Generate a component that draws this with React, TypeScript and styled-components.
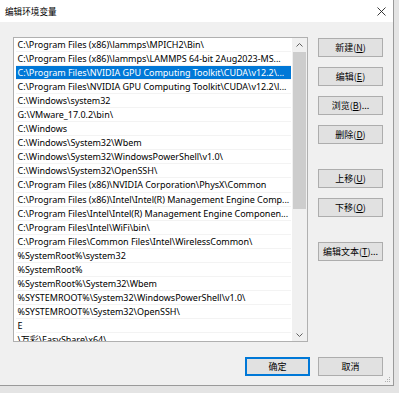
import React from 'react';
import styled, { createGlobalStyle } from 'styled-components';

const Global = createGlobalStyle`
  html, body { margin: 0; padding: 0; background: #e4e4e4; }
  body { width: 399px; height: 393px; overflow: hidden; }
  * { box-sizing: border-box; }
`;

const Window = styled.div`
  position: relative;
  width: 394px;
  height: 386px;
  background: #f0f0f0;
  border-right: 1px solid #9a9a9a;
  border-bottom: 1px solid #9a9a9a;
  display: flex;
  flex-direction: column;
  font-family: "Noto Sans", "Noto Sans CJK SC", sans-serif;
  color: #000;
`;

const TitleBar = styled.div`
  height: 22px;
  background: #fff;
  display: flex;
  align-items: center;
  justify-content: space-between;
  padding: 0 7px 0 5px;
  font-family: "Noto Sans CJK SC", sans-serif;
  font-size: 8.6px;
`;

const Main = styled.div`
  display: flex;
  gap: 10px;
  padding: 15px 0 0 13px;
`;

const ListBox = styled.div`
  width: 295px;
  height: 305px;
  background: #fff;
  border: 1px solid #b0b0b0;
  display: flex;
  overflow: hidden;
`;

const Rows = styled.div`
  flex: 1;
  overflow: hidden;
  padding: 0 1px 0 2px;
`;

const Row = styled.div<{ $selected?: boolean }>`
  height: 14.05px;
  line-height: 13px;
  padding-left: 1.5px;
  font-size: 9px;
  letter-spacing: -0.03px;
  white-space: nowrap;
  overflow: hidden;
  border-bottom: 1px solid #f3f3f3;
  background: ${p => (p.$selected ? '#0078d7' : 'transparent')};
  color: ${p => (p.$selected ? '#fff' : '#000')};
`;

const ScrollBar = styled.div`
  width: 15px;
  background: #f0f0f0;
  display: flex;
  flex-direction: column;
  align-items: center;
`;

const Arrow = styled.div`
  height: 13px;
  width: 100%;
  display: flex;
  align-items: center;
  justify-content: center;
`;

const Thumb = styled.div`
  width: 13px;
  height: 157px;
  margin-top: 1px;
  background: #cdcdcd;
`;

const Spacer = styled.div`
  flex: 1;
`;

const SideButtons = styled.div`
  display: flex;
  flex-direction: column;
  gap: 10px;
  padding-top: 1px;
`;

const Button = styled.div<{ $focused?: boolean; $gapBefore?: number }>`
  width: 65px;
  height: 19px;
  background: #e1e1e1;
  border: 1px solid ${p => (p.$focused ? '#0078d7' : '#adadad')};
  box-shadow: ${p => (p.$focused ? 'inset 0 0 0 1px #0078d7' : 'none')};
  display: flex;
  align-items: center;
  justify-content: center;
  font-family: "Noto Sans CJK SC", sans-serif;
  font-size: 9px;
  margin-top: ${p => p.$gapBefore ?? 0}px;
  u { text-decoration: underline; text-underline-offset: 1px; }
`;

const Bottom = styled.div`
  display: flex;
  justify-content: flex-end;
  gap: 8px;
  padding: 15px 10px 0 0;
`;

const Grip = styled.svg`
  position: absolute;
  right: 2px;
  bottom: 2px;
`;

const rows = [
  'C:\\Program Files (x86)\\lammps\\MPICH2\\Bin\\',
  'C:\\Program Files (x86)\\lammps\\LAMMPS 64-bit 2Aug2023-MS...',
  'C:\\Program Files\\NVIDIA GPU Computing Toolkit\\CUDA\\v12.2\\...',
  'C:\\Program Files\\NVIDIA GPU Computing Toolkit\\CUDA\\v12.2\\l...',
  'C:\\Windows\\system32',
  'G:\\VMware_17.0.2\\bin\\',
  'C:\\Windows',
  'C:\\Windows\\System32\\Wbem',
  'C:\\Windows\\System32\\WindowsPowerShell\\v1.0\\',
  'C:\\Windows\\System32\\OpenSSH\\',
  'C:\\Program Files (x86)\\NVIDIA Corporation\\PhysX\\Common',
  'C:\\Program Files (x86)\\Intel\\Intel(R) Management Engine Comp...',
  'C:\\Program Files\\Intel\\Intel(R) Management Engine Componen...',
  'C:\\Program Files\\Intel\\WiFi\\bin\\',
  'C:\\Program Files\\Common Files\\Intel\\WirelessCommon\\',
  '%SystemRoot%\\system32',
  '%SystemRoot%',
  '%SystemRoot%\\System32\\Wbem',
  '%SYSTEMROOT%\\System32\\WindowsPowerShell\\v1.0\\',
  '%SYSTEMROOT%\\System32\\OpenSSH\\',
  'E',
  '\\万彩\\EasyShare\\x64\\',
];

const Label = ({ text, key1, suffix = '' }: { text: string; key1: string; suffix?: string }) => (
  <span>
    {text}(<u>{key1}</u>){suffix}
  </span>
);

export default function App() {
  return (
    <>
      <Global />
      <Window>
        <TitleBar>
          <span>编辑环境变量</span>
          <svg width="9" height="9" viewBox="0 0 9 9">
            <path d="M0.5 0.5 L8.5 8.5 M8.5 0.5 L0.5 8.5" stroke="#222" strokeWidth="0.9" />
          </svg>
        </TitleBar>
        <Main>
          <ListBox>
            <Rows>
              {rows.map((r, i) => (
                <Row key={i} $selected={i === 2}>
                  {r}
                </Row>
              ))}
            </Rows>
            <ScrollBar>
              <Arrow>
                <svg width="7" height="4" viewBox="0 0 7 4">
                  <path d="M0.5 3.5 L3.5 0.5 L6.5 3.5" stroke="#606060" fill="none" strokeWidth="1" />
                </svg>
              </Arrow>
              <Thumb />
              <Spacer />
              <Arrow>
                <svg width="7" height="4" viewBox="0 0 7 4">
                  <path d="M0.5 0.5 L3.5 3.5 L6.5 0.5" stroke="#606060" fill="none" strokeWidth="1" />
                </svg>
              </Arrow>
            </ScrollBar>
          </ListBox>
          <SideButtons>
            <Button><Label text="新建" key1="N" /></Button>
            <Button><Label text="编辑" key1="E" /></Button>
            <Button><Label text="浏览" key1="B" suffix="..." /></Button>
            <Button><Label text="删除" key1="D" /></Button>
            <Button $gapBefore={15}><Label text="上移" key1="U" /></Button>
            <Button><Label text="下移" key1="O" /></Button>
            <Button $gapBefore={15}><Label text="编辑文本" key1="T" suffix="..." /></Button>
          </SideButtons>
        </Main>
        <Bottom>
          <Button $focused>确定</Button>
          <Button>取消</Button>
        </Bottom>
        <Grip width="8" height="8" viewBox="0 0 8 8">
          {[[6, 2], [6, 4], [4, 4], [6, 6], [4, 6], [2, 6]].map(([x, y], i) => (
            <rect key={i} x={x} y={y} width="1" height="1" fill="#b0b0b0" />
          ))}
        </Grip>
      </Window>
    </>
  );
}
